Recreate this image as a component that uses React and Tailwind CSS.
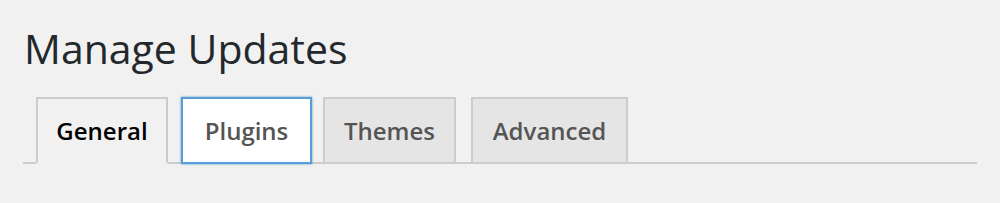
import React from 'react';

const tabs = [
  { label: 'General', state: 'active', cls: 'w-[132px] ml-[13px]' },
  { label: 'Plugins', state: 'focus', cls: 'w-[131px] ml-[13px]' },
  { label: 'Themes', state: 'idle', cls: 'w-[133px] ml-[11px]' },
  { label: 'Advanced', state: 'idle', cls: 'w-[157px] ml-[15px]' },
];

export default function App() {
  return (
    <div className="w-[1000px] h-[203px] bg-[#f1f1f1] pl-[23px] pr-[23px] pt-[22px]" style={{ fontFamily: '"Open Sans", "Noto Sans", sans-serif' }}>
      <h1 className="text-[41px] leading-[52px] text-[#23282d] font-normal pl-[1px]">Manage Updates</h1>
      <nav className="mt-[23px] flex items-end border-b-2 border-[#ccc]">
        {tabs.map(t => (
          <a
            key={t.label}
            href="#"
            className={
              t.cls +
              ' h-[67px] -mb-[2px] flex items-center justify-center text-[24px] font-semibold border-2 ' +
              (t.state === 'active'
                ? 'bg-[#f1f1f1] border-[#ccc] border-b-[#f1f1f1] text-black'
                : t.state === 'focus'
                ? 'bg-white border-[#5b9dd9] shadow-[0_0_2px_rgba(30,140,190,0.8)] text-[#555]'
                : 'bg-[#e5e5e5] border-[#ccc] text-[#555]')
            }
          >
            {t.label}
          </a>
        ))}
      </nav>
    </div>
  );
}
